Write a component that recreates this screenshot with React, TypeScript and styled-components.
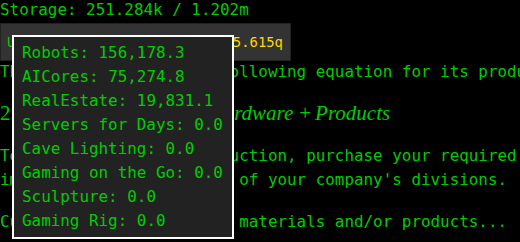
import React from "react";
import styled, { createGlobalStyle } from "styled-components";

const Global = createGlobalStyle`
  html {
    overflow: hidden;
    background: #000;
  }
  body {
    margin: 0;
    padding: 0;
    min-height: 100vh;
    background: #000;
  }
`;

const Page = styled.div`
  position: relative;
  width: 680px;
  font-family: "DejaVu Sans Mono", "Liberation Mono", monospace;
  font-size: 15.9px;
  line-height: 24px;
  color: #0c0;
`;

const Line = styled.div<{ $gap?: number }>`
  margin-top: ${({ $gap }) => $gap ?? 0}px;
  white-space: pre-wrap;
`;

const UpgradeButton = styled.button`
  display: flex;
  align-items: center;
  height: 38px;
  margin-top: 1px;
  padding: 0 7px 0 6px;
  background: #333;
  border: 1px solid #222;
  border-radius: 0;
  font-family: inherit;
  font-size: 13.9px;
  color: #0c0;
  white-space: pre;
  cursor: pointer;
`;

const Money = styled.span`
  color: #ffd700;
`;

const Eq = styled.div`
  margin-top: 17.5px;
  display: flex;
  align-items: baseline;
  font-family: "Liberation Serif", serif;
  font-size: 21px;
  line-height: 24px;
`;

const Num = styled.span`
  font-style: normal;
`;

const Var = styled.span<{ $ml?: number }>`
  font-style: italic;
  margin-left: ${({ $ml }) => $ml ?? 0}px;
`;

const Arrow = styled.span`
  display: inline-block;
  width: 146px;
  text-align: center;
`;

const Op = styled.span`
  margin: 0 4px 0 6px;
`;

const Tip = styled.div`
  position: absolute;
  left: 12px;
  top: 37px;
  padding: 4px 9px 4px 8px;
  background: #222;
  border: 2px solid #fff;
  white-space: pre;
`;

const TipRow = styled.div`
  height: 24px;
  line-height: 24px;
`;

const storage = [
  ["Robots", "156,178.3"],
  ["AICores", "75,274.8"],
  ["RealEstate", "19,831.1"],
  ["Servers for Days", "0.0"],
  ["Cave Lighting", "0.0"],
  ["Gaming on the Go", "0.0"],
  ["Sculpture", "0.0"],
  ["Gaming Rig", "0.0"],
];

export default function App() {
  return (
    <>
      <Global />
      <Page>
        <Line $gap={-2}>Storage: 251.284k / 1.202m</Line>
        <UpgradeButton>
          Upgrade Warehouse Size - <Money>$25.615q</Money>
        </UpgradeButton>
        <Line $gap={-1.5}>This industry uses the following equation for its production:</Line>
        <Eq>
          <Num>2</Num>
          <Var $ml={3}>Metal</Var>
          <Arrow>⟹</Arrow>
          <Var>Hardware</Var>
          <Op>+</Op>
          <Var>Products</Var>
        </Eq>
        <Line $gap={19}>
          To get started with production, purchase your required materials or import them from another of your
          company's divisions.
        </Line>
        <Line $gap={18}>Current state: Producing materials and/or products...</Line>
        <Tip>
          {storage.map(([name, amt]) => (
            <TipRow key={name}>
              {name}: {amt}
            </TipRow>
          ))}
        </Tip>
      </Page>
    </>
  );
}
